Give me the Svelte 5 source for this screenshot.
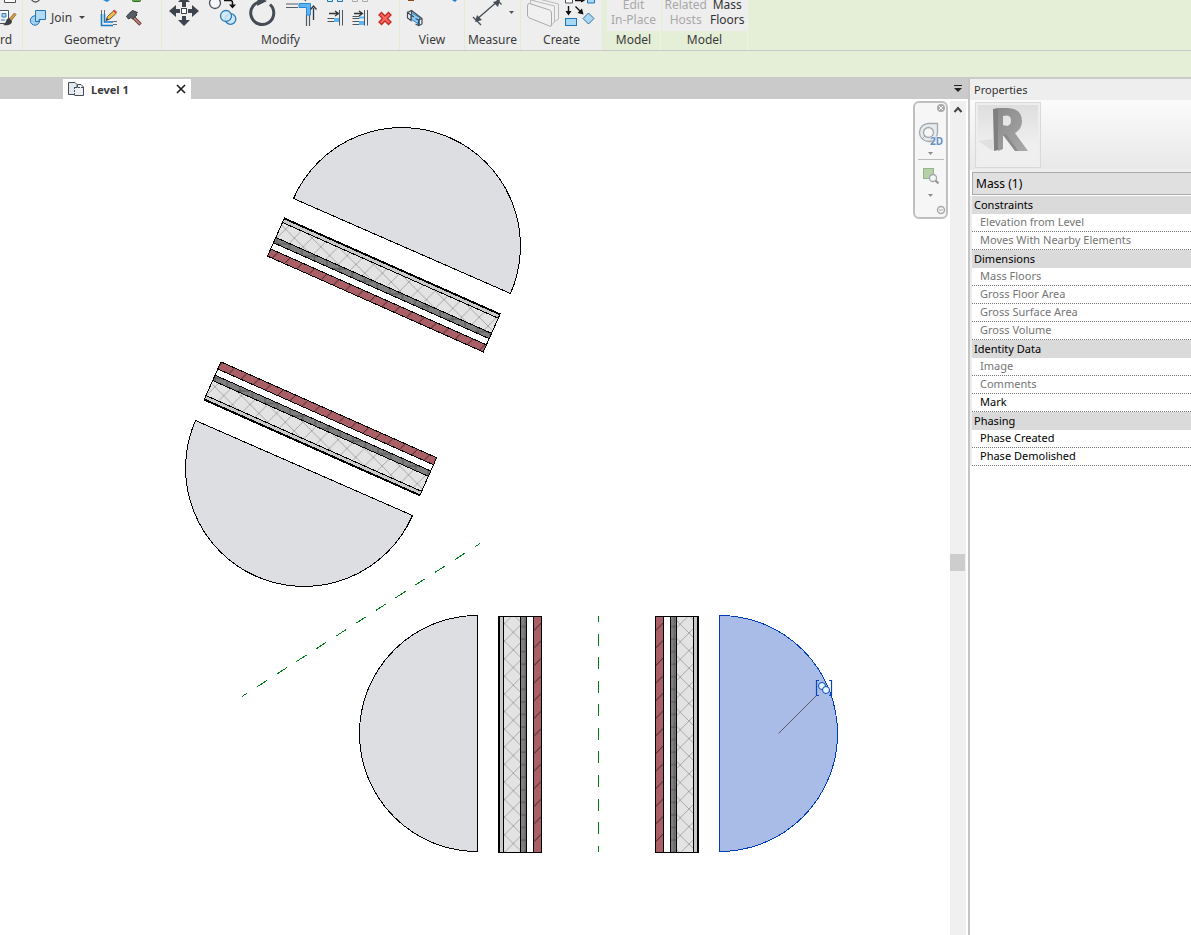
<script>
  const groups = [
    { name: 'Constraints', rows: [['Elevation from Level', false], ['Moves With Nearby Elements', false]] },
    { name: 'Dimensions', rows: [['Mass Floors', false], ['Gross Floor Area', false], ['Gross Surface Area', false], ['Gross Volume', false]] },
    { name: 'Identity Data', rows: [['Image', false], ['Comments', false], ['Mark', true]] },
    { name: 'Phasing', rows: [['Phase Created', true], ['Phase Demolished', true]] }
  ];

  // Each wall: origin at its finish-side corner, u runs across the layers, v along the length.
  const walls = [
    { id: 'a', o: [284.5, 218], u: [-0.394, 0.886], v: [0.914, 0.406], cross: [312, 238], brick: 548, grid: [289.3, 243.7] },
    { id: 'b', o: [204, 400], u: [0.394, -0.886], v: [0.914, 0.406], cross: [223.7, 395.7], brick: 602.7, grid: [227.3, 378.3] },
    { id: 'c', o: [498.5, 616.5], u: [1, 0], v: [0, 1], cross: [513.3, 632.3], brick: 1164.3, grid: [525.5, 626.5] },
    { id: 'd', o: [698.5, 616.5], u: [-1, 0], v: [0, 1], cross: [689, 633], brick: 1303.7, grid: [674.5, 626.5] }
  ];
  const len = 236;
  const T = 17.6;
  const G = 12.56;
  const pt = (w, u, v) => `${(w.o[0] + w.u[0] * u + w.v[0] * v).toFixed(2)},${(w.o[1] + w.u[1] * u + w.v[1] * v).toFixed(2)}`;
  const band = (w, a, b) => [pt(w, a, 0), pt(w, b, 0), pt(w, b, len), pt(w, a, len)].join(' ');
  const line = (w, u) => `M${pt(w, u, 0)}L${pt(w, u, len)}`;
</script>

<div class="app">
  <header class="ribbon">
    <section class="panel clip">
      <div class="tools">
        <button aria-label="Match properties"><svg width="22" height="31" viewBox="0 0 22 31">
          <path d="M4.500 0V2.500H15.500V0" fill="#fff" stroke="#505050"/>
          <path d="M0 10.500H8.500V21M0 23.500H6" fill="#fff" stroke="#48505a"/><path d="M2 13.500H6V17H2zM1 20H5" fill="#a9d3ef" stroke="#3a7fb9"/>
          <path d="M14.500 13L9 19l2 2 5-6.500z" fill="#d99b3c" stroke="#76542a" stroke-width=".7"/><path d="M9 18C5 19 7 23 3 25c4 1 9 0 9-4z" fill="#3c4148"/>
        </svg></button>
      </div>
      <h2 class="start">rd</h2>
    </section>

    <section class="panel geometry">
      <div class="tools">
        <button class="join">
          <svg width="24" height="31" viewBox="24 0 24 31"><circle cx="35.500" cy="-2" r="4" fill="none" stroke="#565b61" stroke-width="1.500"/><circle cx="35" cy="20.500" r="4.700" fill="#9fd0f3" stroke="#2674ae"/><path d="M35.500 10.500h10v9h-6.500v2h-3.500z" fill="#b1daf5" stroke="#2674ae"/></svg>
          <span>Join</span>
          <i class="caret"></i>
        </button>
        <button aria-label="Wall joins"><svg width="26" height="31" viewBox="96 0 26 31">
          <path d="M103 0h7l-3 2z" fill="#1f8ae0"/>
          <path d="M101.500 10v4M104.500 10v4M113 21.500h4M113 24.500h4" stroke="#656b72"/><path d="M101.500 14v11.500H113M104.500 14v8H113" fill="none" stroke="#1679c4" stroke-width="1.600"/>
          <path d="M106 20.500l1.500-4 6.500-6 2.500 2.500-6.500 6z" fill="#f5bd4a" stroke="#5e4833" stroke-width=".9"/><path d="M113 11l1.500-1.500 2.500 2.500-1.500 1.500z" fill="#da4b42"/><path d="M106 20.500l1-2.500 1.500 1.500z" fill="#333"/>
        </svg></button>
        <button aria-label="Demolish"><svg width="24" height="31" viewBox="122 0 24 31">
          <rect x="132.500" y="-4" width="8" height="5.500" rx="1" fill="#5fa845" stroke="#2b671f"/>
          <path d="M133 17l7.500 7.500" stroke="#693a34" stroke-width="3.600"/><path d="M133 17l7 7" stroke="#c78b80" stroke-width="1.600"/>
          <path d="M126.500 16.500l2.500-3 3.500-3 5 2-1.500 1 1 1.500-4.500 4-1.500-1.500-2.500 1.500z" fill="#555c63" stroke="#34393e"/>
        </svg></button>
      </div>
      <h2>Geometry</h2>
    </section>

    <section class="panel modify">
      <div class="tools">
        <button aria-label="Move"><svg width="41" height="31" viewBox="163 0 41 31">
          <path d="M184-4l6 6h-4v5h-4V2h-4zM184 26l-6-6h4v-4h4v4h4zM169 11l7-6v4h4v4h-4v4zM199 11l-7-6v4h-4v4h4v4z" fill="#3d444d"/><rect x="181.500" y="8.500" width="5" height="5" fill="#fff" stroke="#3d444d"/>
        </svg></button>
        <button aria-label="Copy"><svg width="40" height="31" viewBox="204 0 40 31">
          <circle cx="215" cy="3" r="5.500" fill="#f4f6f8" stroke="#4c535b" stroke-width="1.300"/><path d="M224 .5h6.500q2 0 2 2V6" fill="none" stroke="#111" stroke-width="1.500"/><path d="M229 4.500h7l-3.500 4z" fill="#111"/>
          <circle cx="230.500" cy="19" r="5.300" fill="#cfe8f8" stroke="#2a7ab5" stroke-width="1.300"/><circle cx="226" cy="16" r="5.500" fill="#cfe8f8" fill-opacity=".85" stroke="#2a7ab5" stroke-width="1.300"/>
        </svg></button>
        <button aria-label="Rotate"><svg width="40" height="31" viewBox="244 0 40 31">
          <path d="M270 4.500A11.500 11.500 0 1 1 262 1.500" fill="none" stroke="#444b54" stroke-width="3"/><path d="M258-3l9 4-10 5z" fill="#444b54"/>
        </svg></button>
        <button aria-label="Trim and extend"><svg width="40" height="31" viewBox="284 0 40 31">
          <path d="M303-2l3 3M286 4h12M286 7.500h12M306.500 15v11M309.500 15v11" stroke="#555c65" stroke-width="1.200" fill="none"/><path d="M299 3.500h11.500V15h-4V7.500H299z" fill="#5bb5f5" stroke="#2789cf"/><path d="M313.500 20V8M310.500 9.500l3-3.500 3 3.500" fill="none" stroke="#31373e" stroke-width="1.300"/>
        </svg></button>
        <button aria-label="Trim element"><svg width="25" height="31" viewBox="324 0 25 31">
          <path d="M327.500 0v1.500h5V0M337.500 0v1.500h5V0" fill="#dcefff" stroke="#1c75ba"/><path d="M329 13.500h9M335 11l3.500 2.500L335 16" fill="none" stroke="#30353b" stroke-width="1.300"/><path d="M327.500 18.500h7M327.500 21.500h7M339.500 10v15.500M342.500 10v15.500" stroke="#4e5660"/><path d="M334 18h5v4h-5z" fill="#5bb5f5"/>
        </svg></button>
        <button aria-label="Trim several"><svg width="25" height="31" viewBox="349 0 25 31">
          <path d="M352.500 0v1.500h5V0M362.500 0v1.500h5V0" fill="#eee" stroke="#aaa"/><path d="M354 13.500h8M359 11l3.500 2.500L359 16" fill="none" stroke="#30353b" stroke-width="1.300"/><path d="M352.500 16.500h7M352.500 18.500h7M352.500 21.500h7M352.500 24.500h7M364.500 10v15.500M367.500 10v15.500" stroke="#4e5660"/><path d="M359 16.500h5v2h-5zM359 21h5v4h-5z" fill="#5bb5f5"/>
        </svg></button>
        <button aria-label="Delete"><svg width="24" height="31" viewBox="374 0 24 31">
          <path d="M381.500 12.500l3.500 3.500 3.500-3.500 2.500 2.500-3.500 3.500 3.500 3.500-2.500 2.500-3.500-3.500-3.500 3.500-2.500-2.500 3.500-3.500-3.500-3.500z" fill="#fc6a62" stroke="#c62922" stroke-width="1.300"/>
        </svg></button>
      </div>
      <h2>Modify</h2>
    </section>

    <section class="panel view">
      <div class="tools">
        <button aria-label="Selection box"><svg width="64" height="31" viewBox="400 0 64 31">
          <path d="M408 0h6v1h-6z" fill="#8c4a1b"/><path d="M452 0h5l-2 2z" fill="#1f7ad0"/>
          <path d="M411.500 12.500l8 5v7l-8-5z" fill="#8dccf5" stroke="#247dc0"/><path d="M407.500 12.500l4-2 10.500 8v5.500l-3 1.500M407.500 12.500v5.500l3.500 2.500v-5.500zM411.500 10.500v3M411 15l3 2M418.500 20l3.500-1.500M418.500 20v5.500l-3-1.500M418.500 20l-3-1.500" fill="none" stroke="#414952" stroke-width="1.200"/>
        </svg></button>
      </div>
      <h2>View</h2>
    </section>

    <section class="panel measure">
      <div class="tools">
        <button aria-label="Measure"><svg width="55" height="31" viewBox="465 0 55 31">
          <path d="M476 20L499 0M473 17l8 8M493-4l8.500 8.500" stroke="#464d56" stroke-width="1.300"/><path d="M475 22l2-7 5 5zM500 0l-2 7-5-5z" fill="#464d56"/><path d="M509 11h5l-2.500 3z" fill="#555"/>
        </svg></button>
      </div>
      <h2>Measure</h2>
    </section>

    <section class="panel create">
      <div class="tools">
        <button aria-label="Create assembly"><svg width="40" height="31" viewBox="521 0 40 31">
          <g stroke="#b9b9b9" fill="#f0f0f0"><path d="M534.500-2l24 6v15l-3 2-21-7z"/><path d="M530.500 0l24 6v16l-3 3-21-8z"/><path d="M529.500 3.500q-2 0-2 2V15q0 2 2 3l20 8q2 1 2-1V13q0-2-2-3z" stroke="#aaa"/></g>
        </svg></button>
        <button aria-label="Create group"><svg width="40" height="31" viewBox="561 0 40 31">
          <path d="M565.500-3h7v6h-7z" fill="#fff" stroke="#4b5159"/><path d="M587.500-3h7v6h-7z" fill="#a9d8f4" stroke="#1d75b5"/><path d="M568.500 6v8M575 .5h8M575.500 6.500l6 6" stroke="#111" stroke-width="1.400"/><path d="M565.500 11h6l-3 4.500zM583.500 14.500l-6-1.500 4.500-4.500zM581-2l4 2.500-4 2z" fill="#111"/>
          <rect x="565.500" y="18.500" width="11" height="7" fill="#a9d8f4" stroke="#1d75b5"/><path d="M588.500 13l5.500 5.500-5.500 5.500-5.500-5.500z" fill="#a9d8f4" stroke="#33739f"/>
        </svg></button>
      </div>
      <h2>Create</h2>
    </section>

    <section class="context edit">
      <div class="tools"><button class="words" disabled>Edit<br />In-Place</button></div>
      <h2>Model</h2>
    </section>
    <section class="context hosts">
      <div class="tools"><button class="words" disabled>Related<br />Hosts</button><button class="words">Mass<br />Floors</button></div>
      <h2>Model</h2>
    </section>
  </header>
  <div class="options"></div>

  <main>
    <div class="document">
      <nav class="tabs">
        <div class="tab">
          <svg width="18" height="15" viewBox="0 0 18 15"><path d="M.5.500h6.500l2 2V12.500H.5z" fill="#e4e9ee" stroke="#444c55"/><path d="M6.500 5.500h3v-3h3.500l2.500 2.500v8.500h-9z" fill="#edf1f4"/><path d="M9.500 2.500h3.500l2.500 2.500v8.500h-9" fill="none" stroke="#444c55"/><path d="M6.500 5v9" stroke="#444c55" stroke-dasharray="2 1"/><path d="M7 5.500h8" stroke="#444c55" stroke-dasharray="2 1"/><path d="M9.500 2.500v3" stroke="#444c55"/></svg>
          <span>Level 1</span>
          <button aria-label="Close tab"><svg width="10" height="10" viewBox="0 0 10 10"><path d="M1 1l8 8M9 1l-8 8" stroke="#222" stroke-width="1.700"/></svg></button>
        </div>
        <button class="list" aria-label="Tab list"><svg width="10" height="8" viewBox="0 0 10 8"><path d="M1 .5h8" stroke="#222"/><path d="M1 3h8L5 7z" fill="#222"/></svg></button>
      </nav>

      <div class="view-area">
        <div class="canvas">
          <svg class="drawing" width="950" height="836" viewBox="0 99 950 836" role="img" aria-label="Floor plan">
            <defs>
              {#each walls as w}
                <pattern id="ins-{w.id}" patternUnits="userSpaceOnUse" x={w.cross[0] - T / 2} y={w.cross[1] - T / 2} width={T} height={T}>
                  <rect width={T} height={T} fill="#e3e3e3" />
                  <path d="M0 0L{T} {T}M0 {T}L{T} 0" stroke="#999" stroke-width=".8" />
                </pattern>
                <pattern id="brick-{w.id}" patternUnits="userSpaceOnUse" x={w.brick} y="0" width={T} height={T}>
                  <rect width={T} height={T} fill="#aa5f66" />
                  <path d="M0 {T}L{T} 0" stroke="#331a1d" stroke-width=".9" />
                </pattern>
                <pattern id="grid-{w.id}" patternUnits="userSpaceOnUse" x={w.grid[0] - 1} y={w.grid[1] - 1} width={G} height={G}>
                  <rect width={G} height={G} fill="#7f7f7f" />
                  <path d="M1 0V{G}M0 1H{G}" stroke="#4c4c4c" stroke-width=".9" />
                </pattern>
              {/each}
            </defs>

            <g fill="#dddee2" stroke="#000" shape-rendering="crispEdges">
              <path d="M293.500 198.500A118.440 118.440 0 0 1 510.500 293.500Z" />
              <path d="M412.500 515.500A118.440 118.440 0 0 1 195.500 420.500Z" />
              <path d="M477.500 851.500A118 118 0 0 1 477.500 615.500Z" />
              <path d="M719.500 615.500A118 118 0 0 1 719.500 851.500Z" fill="#a9bce8" stroke="#003cb3" />
            </g>

            {#each walls as w}
              <g stroke="none">
                <polygon points={band(w, 0, 5)} fill="#c9c9c9" />
                <polygon points={band(w, 5, 22)} fill="url(#ins-{w.id})" />
                <polygon points={band(w, 22, 28)} fill="url(#grid-{w.id})" />
                <polygon points={band(w, 28, 35)} fill="#fff" />
                <polygon points={band(w, 35, 43)} fill="url(#brick-{w.id})" />
              </g>
              <g fill="none" stroke="#000" shape-rendering="crispEdges">
                <polygon points={band(w, 0, 43)} />
                <path d={line(w, 1) + line(w, 5) + line(w, 22) + line(w, 28) + line(w, 35)} />
              </g>
            {/each}

            <g stroke="#007d12" stroke-dasharray="12 11.570" stroke-dashoffset="6" shape-rendering="crispEdges">
              <path d="M598.500 616V852" />
              <path d="M242 696.500L480 543.500" />
            </g>
            <path d="M778.500 733.500L817 695" stroke="#555a66" />
            <g stroke="#0a46b8" fill="#e4f6ff">
              <path d="M819 680.500h-2.500v15h2.500M829 680.500h2.500v15h-2.500" fill="none" stroke-width="1.200" />
              <circle cx="822" cy="686" r="3.500" /><circle cx="826" cy="690" r="3.500" />
            </g>
          </svg>

          <div class="navbar">
            <button class="mini" aria-label="Close navigation bar"><svg width="10" height="10" viewBox="0 0 10 10"><circle cx="5" cy="5" r="4" fill="#aaa" /><path d="M3 3l4 4M7 3L3 7" stroke="#f6f6f6" /></svg></button>
            <button aria-label="Steering wheel"><svg width="28" height="46" viewBox="917 113 28 46">
              <path d="M929 123.500h8.500v9a9 9 0 1 1-8.500-9z" fill="#e7ebee" stroke="#a3a8ad" stroke-width="1.300" /><circle cx="928.500" cy="132.500" r="5" fill="#f6f6f6" stroke="#a3a8ad" stroke-width="1.300" /><path d="M922 139l3-3" stroke="#a3a8ad" />
              <text x="930" y="145" font-size="10" font-weight="700" fill="#6590c4" stroke="#f6f6f6" stroke-width="1" paint-order="stroke">2D</text>
              <path d="M928 152h5l-2.500 3z" fill="#8b8b8b" />
            </svg></button>
            <hr />
            <button aria-label="Zoom region"><svg width="28" height="41" viewBox="917 160 28 41">
              <rect x="923.500" y="168.500" width="10" height="10" fill="#b6d1aa" stroke="#94b586" /><circle cx="933" cy="178" r="3.500" fill="#f4f7f7" stroke="#a0a5a8" stroke-width="1.300" /><path d="M935.500 180.500l3 3" stroke="#929292" stroke-width="2" />
              <path d="M928 194h5l-2.500 3z" fill="#8b8b8b" />
            </svg></button>
            <button class="mini low" aria-label="Navigation options"><svg width="10" height="10" viewBox="0 0 10 10"><circle cx="5" cy="5" r="3.500" fill="#f6f6f6" stroke="#aaa" stroke-width="1.500" /><path d="M3 5h4" stroke="#aaa" /></svg></button>
          </div>
        </div>
        <div class="scrollbar">
          <button aria-label="Scroll up"><svg width="10" height="7" viewBox="0 0 10 7"><path d="M1.500 6L5 2l3.500 4" fill="none" stroke="#444" stroke-width="2" /></svg></button>
          <div class="thumb"></div>
        </div>
      </div>
    </div>

    <aside>
      <h1>Properties</h1>
      <div class="type">
        <div class="preview">
          <svg width="62" height="62" viewBox="977 104 62 62">
            <defs>
              <linearGradient id="wallShade" x2="0" y2="1"><stop stop-color="#dedede" /><stop offset="1" stop-color="#f1f1f1" /></linearGradient>
              <linearGradient id="face" x2="1" y2="1"><stop stop-color="#8a8a8a" /><stop offset="1" stop-color="#aaa" /></linearGradient>
            </defs>
            <path d="M978 105h60v44l-23-8-37 3z" fill="url(#wallShade)" /><path d="M978 144l37-3 23 8v15h-60z" fill="#efefef" /><path d="M978 141l15-2v12z" fill="#e0e0e0" />
            <path d="M993 109l5-1h8l-4 5v36l-8 2z" fill="#7f7f7f" />
            <path fill-rule="evenodd" d="M998 108h10q14 1 14 13 0 8-7 12l13 18h-12l-11-16-2 1v13l-5 2zM1003 116v9l4 1q4-1 4-5.500t-4-5z" fill="url(#face)" /><path d="M1003 135l3-1 12 17h-3z" fill="#8a8a8a" />
          </svg>
        </div>
      </div>
      <div class="filter">Mass (1)</div>
      <table>
        {#each groups as g}
          <tbody>
            <tr><th>{g.name}</th></tr>
            {#each g.rows as [label, on]}
              <tr><td class:on>{label}</td></tr>
            {/each}
          </tbody>
        {/each}
      </table>
    </aside>
  </main>
</div>

<style>
  :global(body) { margin: 0; background: #fff; overflow: hidden; }
  .app { display: flex; flex-direction: column; height: 100vh; font-family: 'Noto Sans', 'Open Sans', sans-serif; font-size: 12px; color: #3a3a3a; }
  button { border: 0; padding: 0; background: none; font: inherit; color: inherit; flex: none; }
  svg { display: block; }
  h1, h2 { margin: 0; font-size: 12px; font-weight: 400; }

  .ribbon { display: flex; height: 50px; flex: none; background: #e5eed6; border-bottom: 1px solid #c9c9c9; }
  .panel { background: #eee; border-right: 1px solid #e1ecd3; box-sizing: border-box; flex: none; }
  .tools { display: flex; height: 31px; }
  h2 { text-align: center; line-height: 18px; }
  .clip { width: 23px; }
  .start { text-align: left; }
  .geometry { width: 139px; }
  .geometry .tools { padding-left: 1px; }
  .join { display: flex; align-items: center; gap: 3px; width: 72px; }
  .join span { line-height: 16px; padding-top: 4px; }
  .join .caret { margin: 4px 0 0 4px; border: 3px solid transparent; border-top-color: #444; border-bottom: 0; }
  .modify { width: 238px; }
  .modify .tools { padding-left: 1px; }
  .view { width: 65px; }
  .measure { width: 56px; }
  .create { width: 82px; }
  .context { margin-left: 4px; flex: none; border-right: 1px solid #eef3e6; box-sizing: border-box; }
  .context .tools { background: #eee; justify-content: center; }
  .edit { width: 54px; }
  .hosts { width: 86px; margin-left: 1px; }
  .hosts .tools { gap: 3px; }
  .words { display: block; line-height: 15px; align-self: flex-end; padding-bottom: 4px; color: #333; }
  .words:disabled { color: #a8a8a8; }

  .options { height: 26px; flex: none; background: #e5eed6; }
  main { display: flex; flex: 1; min-height: 0; border-top: 2px solid #cacaca; }
  .document { flex: 1; min-width: 0; display: flex; flex-direction: column; }
  .tabs { display: flex; height: 20px; background: #cacaca; justify-content: space-between; align-items: center; padding: 0 5px 0 63px; }
  .tab { display: flex; align-items: center; width: 128px; height: 20px; padding: 0 5px; background: #fff; box-sizing: border-box; font-size: 11px; font-weight: 700; }
  .tab span { flex: 1; padding-left: 5px; }

  .view-area { display: flex; flex: 1; min-height: 0; }
  .canvas { position: relative; flex: 1; overflow: hidden; background: #fff; }
  .navbar { position: absolute; top: 2px; right: 2px; width: 35px; box-sizing: border-box; border: 2px solid #bfbfbf; border-radius: 6px; background: #f6f6f6; display: flex; flex-direction: column; align-items: center; }
  .navbar hr { width: 26px; margin: 0; border: 0; border-top: 1px solid #bbb; }
  .mini { align-self: flex-end; }
  .low { padding: 4px 0 2px; }

  .scrollbar { width: 16px; margin: 2px 2px 0 0; background: #f0f0f0; flex: none; }
  .scrollbar button { display: block; padding: 5px 3px; }
  .thumb { height: 17px; width: 15px; margin-top: 436px; background: #cdcdcd; }

  aside { width: 223px; flex: none; box-sizing: border-box; border-left: 2px solid #c4c4c4; background: #fff; color: #000; font-size: 11px; }
  h1 { line-height: 21px; height: 21px; padding-left: 4px; background: #eee; color: #333; font-size: 11px; }
  .type { height: 68px; padding: 2px 0 0 5px; background: linear-gradient(#fbfbfb, #e8e8e8); }
  .preview { width: 62px; height: 62px; padding: 1px; border: 1px solid #d9d9d9; background: #eee; }
  .filter { margin: 2px 0 1px 2px; height: 21px; line-height: 21px; border: 1px solid #aaa; border-right: 0; background: #e0e0e0; padding-left: 3px; font-size: 12px; box-shadow: 0 -3px 0 #eee; }
  table { width: 100%; border-collapse: separate; border-spacing: 0; border-left: 2px solid #eee; }
  th, td { height: 18px; padding: 0 0 2px; text-align: left; font-weight: 400; line-height: 15px; font-size: 11px; box-sizing: border-box; }
  th { background: #dadada; padding-left: 2px; }
  td { padding-left: 8px; color: #757575; border-bottom: 1px dotted #777; }
  .on { color: #000; }
</style>
